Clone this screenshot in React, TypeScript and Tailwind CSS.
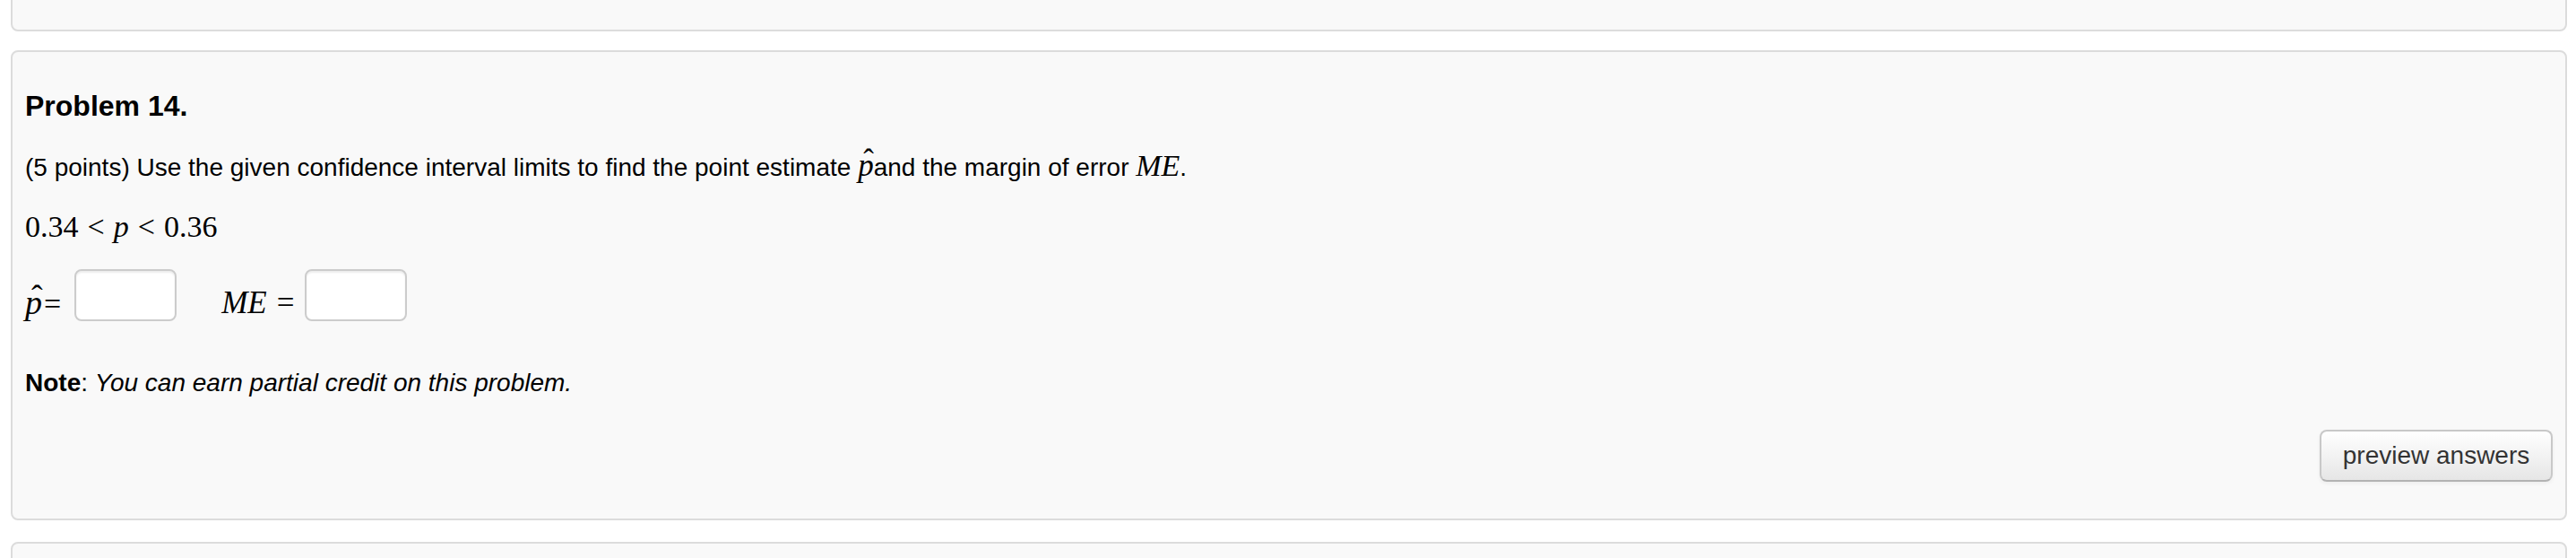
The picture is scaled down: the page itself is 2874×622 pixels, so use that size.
const sans = "font-['Liberation_Sans',Arial,sans-serif]"
const serif = "font-['Liberation_Serif','Times_New_Roman',serif]"

// p with a hat over it, the way MathJax draws \hat{p}
const PHat = ({ className, hat }: { className: string; hat: string }) => (
  <span className={"relative inline-block italic " + serif + " " + className}>
    p
    <span className={"absolute not-italic " + hat}>ˆ</span>
  </span>
)

const Answer = () => (
  <span className="inline-block w-[114px] h-[58px] rounded-[8px] border-2 border-[#ccc] bg-white shadow-[inset_0_2px_2px_rgba(0,0,0,0.075)]" />
)

export default function App() {
  return (
    <div className={"min-h-[622px] w-[2874px] overflow-hidden bg-white text-black " + sans}>
      <div className="ml-[12px] w-[2852px] -mt-[20px] h-[55px] rounded-[8px] border-2 border-[#dcdcdc] bg-[#f9f9f9]" />

      <div className="ml-[12px] mt-[21px] w-[2852px] rounded-[8px] border-2 border-[#dcdcdc] bg-[#f9f9f9] px-[14px] pt-[42px] pb-[41px]">
        <h3 className="text-[32px] leading-[36px] font-bold">Problem 14.</h3>

        <p className="mt-[31px] text-[28px] leading-[36px]">
          (5 points) Use the given confidence interval limits to find the point estimate{" "}
          <PHat className="text-[35px] leading-[36px]" hat="left-[6px] -top-[5px]" />
          and the margin of error{" "}
          <span className={"italic text-[34px] " + serif}>ME</span>.
        </p>

        <div className={"mt-[28px] h-[40px] text-[34px] leading-[40px] " + serif}>
          0.34<span className="mx-[10px]">&lt;</span>
          <span className="italic">p</span>
          <span className="mx-[10px]">&lt;</span>0.36
        </div>

        <div className="mt-[30px] flex h-[58px] items-center">
          <span className={"flex items-baseline pt-[12px] text-[34px] leading-[40px] " + serif}>
            <PHat className="text-[38px] leading-[40px]" hat="left-[7px] -top-[6px]" />
            <span className="ml-[2px]">=</span>
          </span>
          <span className="ml-[15px]">
            <Answer />
          </span>
          <span className={"ml-[50px] pt-[12px] text-[35px] leading-[40px] " + serif}>
            <span className="italic">ME</span>
            <span className="ml-[11px]">=</span>
          </span>
          <span className="ml-[12px]">
            <Answer />
          </span>
        </div>

        <p className="mt-[48px] text-[28px] leading-[36px]">
          <b>Note</b>: <i>You can earn partial credit on this problem.</i>
        </p>

        <div className="mt-[34px] flex justify-end">
          <button className="h-[58px] w-[260px] rounded-[8px] border-2 border-[#c8c8c8] border-b-[#b3b3b3] bg-gradient-to-b from-white to-[#e6e6e6] text-[28px] leading-[38px] text-[#333] shadow-[0_2px_4px_rgba(0,0,0,0.05)]">
            preview answers
          </button>
        </div>
      </div>

      <div className="ml-[12px] mt-[24px] h-[100px] w-[2852px] rounded-[8px] border-2 border-[#dcdcdc] bg-[#f9f9f9]" />
    </div>
  )
}
